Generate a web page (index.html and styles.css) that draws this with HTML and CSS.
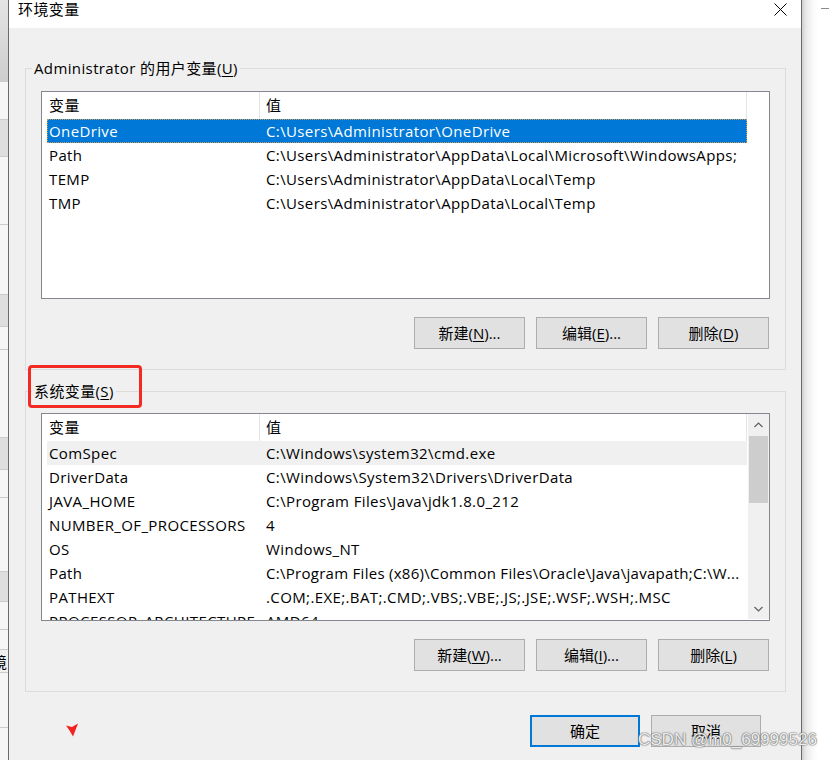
FILE: index.html
```html
<!DOCTYPE html>
<html lang="zh-CN">
<head>
<meta charset="utf-8">
<title>环境变量</title>
<link rel="stylesheet" href="styles.css">
</head>
<body>
<div class="screen">
  <div class="bg-left">
    <div class="band top" style="height:82px"></div>
    <div class="band" style="height:38px"></div>
    <div class="band gray" style="height:37px"></div>
    <div class="band" style="height:68px"></div>
    <div class="band" style="height:70px"></div>
    <div class="band gray" style="height:32px"></div>
    <div class="band" style="height:23px"></div>
    <div class="band" style="height:88px"></div>
    <div class="band gray" style="height:32px"></div>
    <div class="band" style="height:28px"></div>
    <div class="band" style="height:74px"></div>
    <div class="band gray" style="height:30px"></div>
    <div class="band" style="height:28px"></div>
    <div class="band" style="height:20px"></div>
    <div class="band txt" style="height:23px"><span>境变</span></div>
    <div class="band" style="height:55px"></div>
    <div class="band" style="height:40px"></div>
  </div>

  <div class="dialog">
    <div class="titlebar">
      <span class="title">环境变量</span>
      <svg class="close" width="13" height="13" viewBox="0 0 13 13"><path d="M0.5 0.5 L12.5 12.5 M12.5 0.5 L0.5 12.5" stroke="#000" stroke-width="1" fill="none"/></svg>
    </div>
    <div class="body">
      <div class="group g1">
        <div class="legend">Administrator 的用户变量(<u>U</u>)</div>
        <div class="list">
          <div class="list-main">
            <div class="head"><div class="hc h1">变量</div><div class="hc h2">值</div></div>
            <div class="rows">
              <div class="row sel"><span class="c1">OneDrive</span><span class="c2">C:\Users\Administrator\OneDrive</span></div>
              <div class="row"><span class="c1">Path</span><span class="c2">C:\Users\Administrator\AppData\Local\Microsoft\WindowsApps;</span></div>
              <div class="row"><span class="c1">TEMP</span><span class="c2">C:\Users\Administrator\AppData\Local\Temp</span></div>
              <div class="row"><span class="c1">TMP</span><span class="c2">C:\Users\Administrator\AppData\Local\Temp</span></div>
            </div>
          </div>
        </div>
        <div class="btns">
          <div class="btn">新建(<u>N</u>)...</div>
          <div class="btn">编辑(<u>E</u>)...</div>
          <div class="btn">删除(<u>D</u>)</div>
        </div>
      </div>

      <div class="group g2">
        <div class="legend">系统变量(<u>S</u>)</div>
        <div class="list">
          <div class="list-main">
            <div class="head"><div class="hc h1">变量</div><div class="hc h2">值</div></div>
            <div class="rows">
              <div class="row hot"><span class="c1">ComSpec</span><span class="c2">C:\Windows\system32\cmd.exe</span></div>
              <div class="row"><span class="c1">DriverData</span><span class="c2">C:\Windows\System32\Drivers\DriverData</span></div>
              <div class="row"><span class="c1">JAVA_HOME</span><span class="c2">C:\Program Files\Java\jdk1.8.0_212</span></div>
              <div class="row"><span class="c1">NUMBER_OF_PROCESSORS</span><span class="c2">4</span></div>
              <div class="row"><span class="c1">OS</span><span class="c2">Windows_NT</span></div>
              <div class="row"><span class="c1">Path</span><span class="c2 tight">C:\Program Files (x86)\Common Files\Oracle\Java\javapath;C:\W...</span></div>
              <div class="row"><span class="c1">PATHEXT</span><span class="c2">.COM;.EXE;.BAT;.CMD;.VBS;.VBE;.JS;.JSE;.WSF;.WSH;.MSC</span></div>
              <div class="row"><span class="c1">PROCESSOR_ARCHITECTURE</span><span class="c2">AMD64</span></div>
            </div>
          </div>
          <div class="vscroll">
            <div class="arrow"><svg width="9" height="6" viewBox="0 0 9 6"><path d="M0.5 5 L4.5 1 L8.5 5" stroke="#606060" stroke-width="1.2" fill="none"/></svg></div>
            <div class="thumb"></div>
            <div class="track"></div>
            <div class="arrow"><svg width="9" height="6" viewBox="0 0 9 6"><path d="M0.5 1 L4.5 5 L8.5 1" stroke="#606060" stroke-width="1.2" fill="none"/></svg></div>
          </div>
        </div>
        <div class="btns">
          <div class="btn">新建(<u>W</u>)...</div>
          <div class="btn">编辑(<u>I</u>)...</div>
          <div class="btn">删除(<u>L</u>)</div>
        </div>
      </div>

      <div class="dlg-btns">
        <div class="btn dbtn default">确定</div>
        <div class="btn dbtn">取消</div>
      </div>
    </div>
  </div>

  <div class="bg-right"><div class="dash"></div></div>

  <div class="redbox"></div>
  <svg class="arrow-mark" width="13" height="14" viewBox="0 0 13 14"><polygon points="0,2.5 6,4 12,0.5 9.5,7 7,13.5 3.5,7.5" fill="#f52020"/></svg>
  <div class="watermark">CSDN @m0_69999526</div>
</div>
</body>
</html>
```

FILE: styles.css
```css
* { box-sizing: border-box; }
html, body { margin: 0; padding: 0; }
body {
  width: 829px;
  height: 760px;
  overflow: hidden;
  background: #fff;
  font-family: "Open Sans", "Noto Sans CJK SC", sans-serif;
  font-size: 15px;
  letter-spacing: 0.38px;
  color: #000;
}
u { text-decoration-thickness: 1px; text-underline-offset: 2px; }

.screen {
  position: relative;
  display: flex;
  width: 829px;
  height: 760px;
  overflow: hidden;
}

/* background window strip on the left */
.bg-left {
  width: 8px;
  flex: none;
  display: flex;
  flex-direction: column;
  background: #f6f6f6;
  overflow: hidden;
}
.band { flex: none; border-bottom: 1px solid #cccccc; }
.band.top { background: linear-gradient(#e4e4e4, #cdcdcd); }
.band.gray { background: #dedede; }
.band.txt { background: #f0f0f0; line-height: 23px; white-space: nowrap; overflow: hidden; font-family: "Noto Sans CJK SC", sans-serif; }
.band.txt span { display: inline-block; margin-left: -8px; }

/* dialog */
.dialog {
  width: 794px;
  flex: none;
  border-left: 1px solid #6a6a6a;
  border-right: 1px solid #6a6a6a;
  background: #f0f0f0;
  display: flex;
  flex-direction: column;
}
.titlebar {
  height: 28px;
  flex: none;
  background: #fff;
  display: flex;
  justify-content: space-between;
  align-items: flex-start;
  padding: 0 14px 0 9px;
}
.title { line-height: 18px; font-size: 15px; }
.close { margin-top: 3px; display: block; }

.body { display: flex; flex-direction: column; }

.group {
  margin: 0 15px 0 16px;
  border: 1px solid #dcdcdc;
  padding: 0 15px 20px;
}
.g1 { margin-top: 40px; }
.g2 { margin-top: 21px; }
.legend {
  width: fit-content;
  height: 18px;
  line-height: 18px;
  margin: -10px 0 0 -9px;
  padding: 0 2px;
  background: #f0f0f0;
  white-space: nowrap;
}

.list {
  margin-top: 14px;
  height: 208px;
  border: 1px solid #828790;
  background: #fff;
  display: flex;
  overflow: hidden;
}
.g2 .list { margin-top: 13px; }
.list-main { width: 705px; flex: none; }
.head { display: flex; height: 27px; }
.hc {
  height: 27px;
  line-height: 26px;
  border-right: 1px solid #e5e5e5;
  white-space: nowrap;
}
.h1 { width: 218px; padding-left: 7px; }
.h2 { width: 487px; padding-left: 6px; }

.rows { padding-left: 5px; }
.row {
  display: flex;
  height: 24px;
  line-height: 24px;
  white-space: nowrap;
  overflow: hidden;
}
.row .c1 { width: 219px; flex: none; padding-left: 2px; overflow: hidden; }
.row .c2 { flex: 1; overflow: hidden; }
.row .c2.tight { letter-spacing: 0.28px; }
.row.sel {
  background: #0078d7;
  color: #fff;
  outline: 1px dotted #c79a5a;
  outline-offset: -1px;
}
.row.hot { background: #f0f0f0; }

.vscroll {
  width: 21px;
  flex: none;
  margin-left: 1px;
  margin-bottom: 1px;
  background: #f0f0f0;
  display: flex;
  flex-direction: column;
}
.vscroll .arrow {
  height: 21px;
  flex: none;
  display: flex;
  align-items: center;
  justify-content: center;
}
.vscroll .arrow svg { display: block; }
.thumb { height: 67px; flex: none; margin: 1px 1px 0; background: #cdcdcd; }
.track { flex: 1; }

.btns {
  display: flex;
  justify-content: flex-end;
  gap: 11px;
  margin: 18px 1px 0 0;
}
.btn {
  width: 111px;
  height: 32px;
  background: #e1e1e1;
  border: 1px solid #adadad;
  display: flex;
  align-items: center;
  justify-content: center;
  line-height: 18px;
  white-space: nowrap;
  letter-spacing: 0;
}
.dlg-btns {
  display: flex;
  justify-content: flex-end;
  gap: 11px;
  margin: 23px 40px 0 0;
}
.dbtn { width: 110px; }
.btn.default { border: 2px solid #0078d7; }

/* right side: shadow + background window */
.bg-right {
  flex: 1;
  background: linear-gradient(to right, #cfcfcf 0, #e9e9e9 4px, #fbfbfb 12px, #fff 16px);
}
.dash { width: 8px; height: 1px; margin: 8px 0 0 19px; background: #8a8a8a; }

/* annotations */
.redbox {
  position: absolute;
  left: 28px;
  top: 365px;
  width: 114px;
  height: 43px;
  border: 3px solid #f22a22;
  border-radius: 4px;
}
.arrow-mark { position: absolute; left: 66px; top: 723px; }
.watermark {
  position: absolute;
  left: 638px;
  top: 730px;
  font-family: "Liberation Sans", sans-serif;
  font-size: 17px;
  line-height: 20px;
  letter-spacing: 0;
  color: rgba(255, 255, 255, 0.9);
  text-shadow: 0 0 1px #6a6a6a, 0 0 1px #6a6a6a, 0 0 2px #8a8a8a;
  white-space: nowrap;
}
```
